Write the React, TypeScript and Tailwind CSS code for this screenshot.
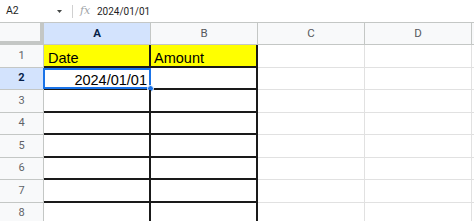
import React from "react";

const rows = [1, 2, 3, 4, 5, 6, 7, 8];
const cols = ["A", "B", "C", "D"];

export default function App() {
  return (
    <div className="w-[474px] h-[221px] bg-white overflow-hidden relative" style={{ fontFamily: "Roboto, 'Liberation Sans', sans-serif" }}>
      {/* formula bar */}
      <div className="h-[22px] flex items-center text-[10.5px] text-[#1f1f1f]">
        <div className="w-[57px] pl-[6px]">A2</div>
        <svg width="5" height="3" viewBox="0 0 5 3">
          <path d="M0 0 L5 0 L2.5 3 Z" fill="#444746" />
        </svg>
        <div className="ml-[10px] w-px h-[13px] bg-[#d0d0d0]" />
        <div className="ml-[7px] w-[17px] text-[11px] italic text-[#a0a4a8]" style={{ fontFamily: "'DejaVu Serif', serif" }}>fx</div>
        <div className="text-[10px]">2024/01/01</div>
      </div>
      <div className="grid grid-cols-[44px_107px_107px_107px_107px_1fr]">
        {/* header row */}
        <div className="h-[23px] bg-[#f8f9fa] border-t border-r-[4px] border-b-[4px] border-[#c4c7c5]" />
        {cols.map((c) => (
          <div
            key={c}
            className={`h-[23px] flex items-center justify-center text-[11.5px] border-t border-r border-b border-[#c4c7c5] ${
              c === "A" ? "bg-[#d3e3fd] text-[#041e49] font-bold" : "bg-[#f8f9fa] text-[#575a5e]"
            }`}
          >
            {c}
          </div>
        ))}
        <div className="h-[23px] bg-[#f8f9fa] border-t border-b border-[#c4c7c5]" />
        {rows.map((r) => (
          <React.Fragment key={r}>
            <div
              className={`h-[22.5px] flex items-center justify-center text-[11px] border-r border-b border-[#c4c7c5] ${
                r === 2 ? "bg-[#d3e3fd] text-[#041e49] font-bold" : "bg-[#f8f9fa] text-[#5f6368]"
              }`}
            >
              {r}
            </div>
            <div
              className={`h-[22.5px] relative flex items-end leading-[15px] text-[14.5px] text-black border-r-2 border-b-2 border-[#1a1a1a] ${
                r === 1 ? "bg-[#ffff00] pl-[4px]" : "bg-white justify-end pr-[2px]"
              }`}
              style={{ fontFamily: "'Liberation Sans', Arial, sans-serif" }}
            >
              {r === 1 ? "Date" : r === 2 ? "2024/01/01" : ""}
              {r === 2 && (
                <>
                  <div className="absolute -left-px top-0 -right-[2px] -bottom-[1px] border-2 border-[#1a73e8]" />
                  <div className="absolute -right-[5px] -bottom-[4px] w-[7px] h-[7px] rounded-full bg-[#1a73e8] border border-white" />
                </>
              )}
            </div>
            <div
              className={`h-[22.5px] flex items-end leading-[15px] text-[14.5px] text-black border-r-2 border-b-2 border-[#1a1a1a] ${
                r === 1 ? "bg-[#ffff00] pl-[3px]" : "bg-white"
              }`}
              style={{ fontFamily: "'Liberation Sans', Arial, sans-serif" }}
            >
              {r === 1 ? "Amount" : ""}
            </div>
            <div className="h-[22.5px] border-r border-b border-[#e1e1e1]" />
            <div className="h-[22.5px] border-r border-b border-[#e1e1e1]" />
            <div className="h-[22.5px] border-b border-[#e1e1e1]" />
          </React.Fragment>
        ))}
      </div>
    </div>
  );
}
